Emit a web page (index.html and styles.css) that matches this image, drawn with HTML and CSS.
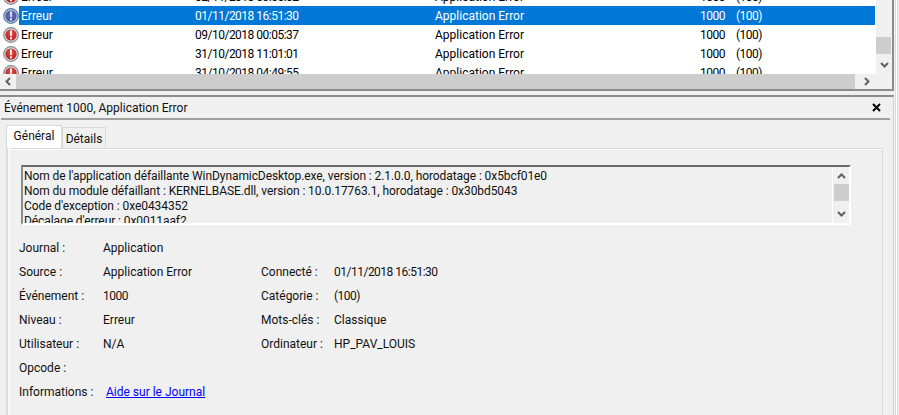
FILE: index.html
```html
<!DOCTYPE html>
<html lang="fr">
<head>
<meta charset="utf-8">
<title>Événement 1000, Application Error</title>
<link rel="stylesheet" href="styles.css">
</head>
<body>
<svg class="defs" width="0" height="0" aria-hidden="true">
  <defs>
    <radialGradient id="red" cx="50%" cy="40%" r="60%"><stop offset="0" stop-color="#e8504a"/><stop offset="1" stop-color="#b81e22"/></radialGradient>
    <radialGradient id="blue" cx="50%" cy="40%" r="60%"><stop offset="0" stop-color="#6a78c0"/><stop offset="1" stop-color="#4a4f96"/></radialGradient>
    <symbol id="err" viewBox="0 0 16 16">
      <circle cx="8" cy="8" r="7.3" fill="#d8d8d8" stroke="#8a8a8a" stroke-width="1.2"/>
      <circle cx="8" cy="8" r="5.6" fill="url(#red)"/>
      <path d="M6.9 3.6h2.2l-.4 5.6H7.3z" fill="#fff"/>
      <rect x="7" y="10.3" width="2" height="2" fill="#fff"/>
    </symbol>
    <symbol id="err-sel" viewBox="0 0 16 16">
      <circle cx="8" cy="8" r="7.3" fill="#a9c6e6" stroke="#5f7fa8" stroke-width="1.2"/>
      <circle cx="8" cy="8" r="5.6" fill="url(#blue)"/>
      <path d="M6.9 3.6h2.2l-.4 5.6H7.3z" fill="#dfe6f6"/>
      <rect x="7" y="10.3" width="2" height="2" fill="#dfe6f6"/>
    </symbol>
  </defs>
</svg>

<main class="app">
<section class="list-pane">
  <div class="list-main">
    <div class="list-view">
      <div class="rows">
        <div class="row"><svg class="ico"><use href="#err"/></svg><span class="cell lvl">Erreur</span><span class="cell date num">02/11/2018 03:00:02</span><span class="cell src">Application Error</span><span class="cell id num">1000</span><span class="cell cat num">(100)</span></div>
        <div class="row selected"><svg class="ico"><use href="#err-sel"/></svg><span class="cell lvl">Erreur</span><span class="cell date num">01/11/2018 16:51:30</span><span class="cell src">Application Error</span><span class="cell id num">1000</span><span class="cell cat num">(100)</span></div>
        <div class="row"><svg class="ico"><use href="#err"/></svg><span class="cell lvl">Erreur</span><span class="cell date num">09/10/2018 00:05:37</span><span class="cell src">Application Error</span><span class="cell id num">1000</span><span class="cell cat num">(100)</span></div>
        <div class="row"><svg class="ico"><use href="#err"/></svg><span class="cell lvl">Erreur</span><span class="cell date num">31/10/2018 11:01:01</span><span class="cell src">Application Error</span><span class="cell id num">1000</span><span class="cell cat num">(100)</span></div>
        <div class="row"><svg class="ico"><use href="#err"/></svg><span class="cell lvl">Erreur</span><span class="cell date num">31/10/2018 04:49:55</span><span class="cell src">Application Error</span><span class="cell id num">1000</span><span class="cell cat num">(100)</span></div>
      </div>
    </div>
    <div class="vscroll">
      <span class="vtrack"><span class="vthumb"></span></span>
      <svg class="arrow" viewBox="0 0 9 6"><path d="M1 1l3.5 3.5L8 1" class="chev"/></svg>
    </div>
  </div>
  <div class="hscroll">
    <svg class="arrow-h" viewBox="0 0 6 9"><path d="M5 1L1.5 4.5 5 8" class="chev"/></svg>
    <span class="htrack"></span>
    <svg class="arrow-h next" viewBox="0 0 6 9"><path d="M1 1l3.5 3.5L1 8" class="chev"/></svg>
  </div>
</section>

<section class="detail-pane">
  <header class="detail-head">
    <span>Événement 1000, Application Error</span>
    <svg class="close" viewBox="0 0 9 9"><path d="M1 1l7 7M8 1L1 8"/></svg>
  </header>
  <div class="tabs">
    <span class="tab active">Général</span>
    <span class="tab">Détails</span>
  </div>
  <div class="tab-frame">
  <div class="tab-body">
    <div class="msg">
      <div class="msg-text">
        <p>Nom de l'application défaillante WinDynamicDesktop.exe, version : 2.1.0.0, horodatage : 0x5bcf01e0</p>
        <p>Nom du module défaillant : KERNELBASE.dll, version : 10.0.17763.1, horodatage : 0x30bd5043</p>
        <p>Code d'exception : 0xe0434352</p>
        <p>Décalage d'erreur : 0x0011aaf2</p>
      </div>
      <div class="msg-scroll">
        <svg class="arrow" viewBox="0 0 9 6"><path d="M1 5l3.5-3.5L8 5" class="chev"/></svg>
        <span class="msg-thumb"></span>
        <svg class="arrow" viewBox="0 0 9 6"><path d="M1 1l3.5 3.5L8 1" class="chev"/></svg>
      </div>
    </div>
    <div class="props">
      <span class="k">Journal :</span><span class="v">Application</span><span></span><span></span>
      <span class="k">Source :</span><span class="v">Application Error</span><span class="k">Connecté :</span><span class="v num">01/11/2018 16:51:30</span>
      <span class="k">Événement :</span><span class="v num">1000</span><span class="k">Catégorie :</span><span class="v num">(100)</span>
      <span class="k">Niveau :</span><span class="v">Erreur</span><span class="k">Mots-clés :</span><span class="v">Classique</span>
      <span class="k">Utilisateur :</span><span class="v">N/A</span><span class="k">Ordinateur :</span><span class="v">HP_PAV_LOUIS</span>
      <span class="k">Opcode :</span><span class="v"></span><span></span><span></span>
      <span class="k">Informations :</span><span class="v"><a class="link" href="#">Aide sur le Journal</a></span><span></span><span></span>
    </div>
  </div>
  </div>
</section>
</main>
<div class="edge"></div>
</body>
</html>
```
FILE: styles.css
```css
* { box-sizing: border-box; }
html, body { margin: 0; height: 100%; }
body {
  display: flex;
  width: 899px; height: 415px; overflow: hidden;
  background: #f0f0f0; color: #111;
  font: 12px/16px Roboto, "Open Sans", sans-serif;
}
.defs { position: absolute; }
p { margin: 0; }
.num { letter-spacing: -0.5px; }
.app { width: 894px; flex: none; }
.edge { width: 3px; margin-left: 1px; background: #fff; border-left: 1px solid #dcdcdc; border-right: 1px solid #dcdcdc; }

.list-pane {
  height: 91px;
  border-right: 2px solid #8c8c8c;
  border-bottom: 2px solid #8c8c8c;
  background: #f0f0f0;
}
.list-main { display: flex; height: 74px; }
.list-view { width: 876px; overflow: hidden; background: #fff; }
.rows { margin-top: -13px; padding-right: 1px; }
.row { display: flex; align-items: center; height: 19px; color: #000; }
.ico { width: 16px; height: 16px; margin-left: 3px; flex: none; }
.cell { display: block; height: 19px; line-height: 21px; white-space: nowrap; }
.row .lvl { width: 176px; padding-left: 2px; }
.row .date { width: 240px; }
.row .src { width: 265px; }
.row .id { width: 36px; }
.row .cat { flex: 1; }
.row.selected .cell { background: #0078d7; color: #fff; }

.vscroll { width: 16px; display: flex; flex-direction: column; background: #f0f0f0; }
.vtrack { flex: 1; display: block; padding-top: 37px; }
.vthumb { display: block; height: 17px; width: 15px; background: #cdcdcd; }
.arrow { display: block; width: 9px; height: 6px; margin: 0 auto 6px; }
.chev { fill: none; stroke: #606060; stroke-width: 2; }

.hscroll { display: flex; align-items: center; height: 15px; background: #f0f0f0; }
.arrow-h { width: 6px; height: 9px; margin: 0 5px; flex: none; }
.arrow-h.next { margin: 0 22px 0 9px; }
.htrack { flex: 1; height: 15px; background: #cdcdcd; }

.detail-pane { margin-top: 4px; height: 320px; border-top: 2px solid #8c8c8c; border-right: 1px solid #d4d4d4; }
.detail-head {
  display: flex; justify-content: space-between; align-items: center;
  height: 23px; margin: 0 3px 0 1px; padding: 0 9px 0 3px;
  border-bottom: 2px solid #a0a0a0;
}
.close { width: 9px; height: 9px; }
.close path { fill: none; stroke: #000; stroke-width: 2; }

.tabs { display: flex; align-items: flex-end; height: 28px; padding-left: 6px; }
.tab {
  height: 21px; width: 44px; text-align: center; line-height: 22px;
  border: 1px solid #d9d9d9; border-bottom: 0;
}
.tab.active { height: 23px; width: 56px; line-height: 20px; background: #fff; }

.tab-frame { margin: 0 10px 0 6px; border-left: 2px solid #dcdcdc; padding-left: 2px; background: #f8f8f8; }
.tab-body {
  height: 270px; padding: 16px 31px 0 11px;
  border: 1px solid #d9d9d9; border-bottom: 0; border-left: 0;
  background: #f0f0f0;
  box-shadow: inset 0 1px 0 #fff;
}
.msg {
  display: flex; height: 60px; overflow: hidden;
  border-top: 2px solid #696969; border-left: 2px solid #8c8c8c;
  border-right: 2px solid #fff; border-bottom: 2px solid #fff;
}
.msg-text { flex: 1; padding: 2px 0 0 1px; line-height: 15px; white-space: nowrap; overflow: hidden; letter-spacing: -0.08px; }
.msg-scroll {
  width: 17px; display: flex; flex-direction: column; align-items: center;
  border-left: 1px solid #fff; padding-top: 6px;
}
.msg-scroll .arrow { margin: 0; }
.msg-thumb { display: block; width: 15px; height: 17px; margin: 5px 0 10px; background: #cdcdcd; }

.props {
  display: grid;
  grid-template-columns: 84px 158px 73px 1fr;
  grid-auto-rows: 24px;
  align-items: center;
  margin: 11px 0 0 -2px;
}
.k, .v { white-space: nowrap; }
.link { color: #0000ff; text-decoration: underline; margin-left: 3px; }
```
